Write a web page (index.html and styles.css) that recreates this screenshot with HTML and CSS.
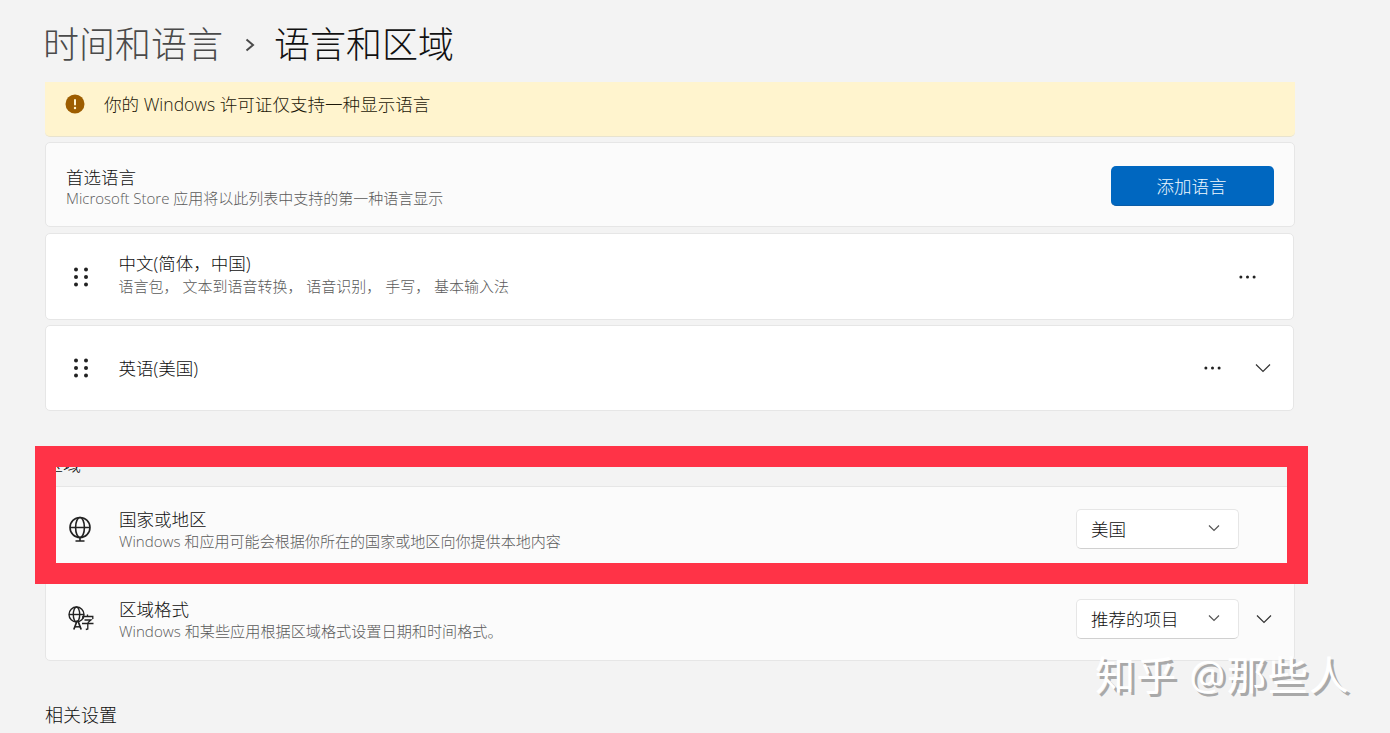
FILE: index.html
```html
<!DOCTYPE html>
<html lang="zh-CN">
<head>
<meta charset="utf-8">
<title>语言和区域</title>
<link rel="stylesheet" href="styles.css">
</head>
<body>
<main class="page">
  <h1 class="title"><span class="crumb">时间和语言</span><svg class="crumb-sep" viewBox="0 0 12 16" width="12" height="16"><path d="M2.5 2.5L9 8l-6.5 5.5" fill="none" stroke="#4a4a4a" stroke-width="2"/></svg><span>语言和区域</span></h1>

  <section class="notice">
    <svg class="notice-icon" viewBox="0 0 20 20" width="20" height="20"><circle cx="10" cy="10" r="9.5" fill="#9d5d00"/><rect x="9" y="5" width="2" height="6.5" rx="1" fill="#fff4ce"/><circle cx="10" cy="14" r="1.2" fill="#fff4ce"/></svg>
    <span class="notice-text">你的 Windows 许可证仅支持一种显示语言</span>
  </section>

  <section class="card card-pref">
    <div class="texts">
      <div class="name">首选语言</div>
      <div class="desc">Microsoft Store 应用将以此列表中支持的第一种语言显示</div>
    </div>
    <button class="primary">添加语言</button>
  </section>

  <section class="card card-lang lang-first">
    <svg class="grip" viewBox="0 0 16 20" width="16" height="20"><g fill="#222"><circle cx="3" cy="2.5" r="2"/><circle cx="13" cy="2.5" r="2"/><circle cx="3" cy="10" r="2"/><circle cx="13" cy="10" r="2"/><circle cx="3" cy="17.5" r="2"/><circle cx="13" cy="17.5" r="2"/></g></svg>
    <div class="texts">
      <div class="name">中文(简体，中国)</div>
      <div class="desc">语言包， 文本到语音转换， 语音识别， 手写， 基本输入法</div>
    </div>
    <svg class="more more-only" viewBox="0 0 18 4" width="17" height="4"><g fill="#222"><circle cx="2" cy="2" r="1.6"/><circle cx="9" cy="2" r="1.6"/><circle cx="16" cy="2" r="1.6"/></g></svg>
  </section>

  <section class="card card-lang lang-second">
    <svg class="grip" viewBox="0 0 16 20" width="16" height="20"><g fill="#222"><circle cx="3" cy="2.5" r="2"/><circle cx="13" cy="2.5" r="2"/><circle cx="3" cy="10" r="2"/><circle cx="13" cy="10" r="2"/><circle cx="3" cy="17.5" r="2"/><circle cx="13" cy="17.5" r="2"/></g></svg>
    <div class="texts">
      <div class="name">英语(美国)</div>
    </div>
    <svg class="more" viewBox="0 0 18 4" width="17" height="4"><g fill="#222"><circle cx="2" cy="2" r="1.6"/><circle cx="9" cy="2" r="1.6"/><circle cx="16" cy="2" r="1.6"/></g></svg>
    <svg class="expand" viewBox="0 0 16 10" width="16" height="10"><path d="M1 1.5l7 7 7-7" fill="none" stroke="#333" stroke-width="1.2"/></svg>
  </section>

  <h2 class="section-head region-head">区域</h2>

  <section class="card card-region">
    <svg class="row-icon" viewBox="0 0 24 26" width="24" height="26"><g fill="none" stroke="#222" stroke-width="1.6"><circle cx="12" cy="11.5" r="10"/><ellipse cx="12" cy="11.5" rx="4.4" ry="10"/><path d="M2 11.5h20M12 21.5v3.5M7.5 25h9"/></g></svg>
    <div class="texts">
      <div class="name">国家或地区</div>
      <div class="desc">Windows 和应用可能会根据你所在的国家或地区向你提供本地内容</div>
    </div>
    <div class="select"><span>美国</span><svg viewBox="0 0 12 8" width="12" height="8"><path d="M1 1.5l5 5 5-5" fill="none" stroke="#555" stroke-width="1.2"/></svg></div>
    <span class="expand-gap"></span>
  </section>

  <section class="card card-format">
    <svg class="row-icon" viewBox="0 0 26 26" width="26" height="26"><g fill="none" stroke="#222" stroke-width="1.4"><circle cx="8.5" cy="8.5" r="7.5"/><ellipse cx="8.5" cy="8.5" rx="3.2" ry="7.5"/><path d="M1 8.5h15"/></g><path d="M5.8 23.5l3.2-8.5h1l3.2 8.5" fill="#fbfbfb" stroke="#222" stroke-width="1.7"/><path d="M7 20.8h5.6" stroke="#222" stroke-width="1.5"/><path d="M19.5 8.5v2M14.8 13v-2.5h10V13M16.5 14h6.5l-3 2.5M14 17.5h11.5M19.8 16.5v6.5l-2 .5" fill="none" stroke="#222" stroke-width="1.3"/></svg>
    <div class="texts">
      <div class="name">区域格式</div>
      <div class="desc">Windows 和某些应用根据区域格式设置日期和时间格式。</div>
    </div>
    <div class="select"><span>推荐的项目</span><svg viewBox="0 0 12 8" width="12" height="8"><path d="M1 1.5l5 5 5-5" fill="none" stroke="#555" stroke-width="1.2"/></svg></div>
    <svg class="expand expand-format" viewBox="0 0 16 10" width="16" height="10"><path d="M1 1.5l7 7 7-7" fill="none" stroke="#333" stroke-width="1.2"/></svg>
  </section>

  <h2 class="section-head related-head">相关设置</h2>
</main>
<div class="red-frame"></div>
<div class="watermark">知乎 @那些人</div>
</body>
</html>
```
FILE: styles.css
```css
* { box-sizing: border-box; }
html, body { margin: 0; height: 100%; }
body {
  background: #f3f3f3;
  color: #1b1b1b;
  font-family: "Open Sans", "Noto Sans CJK SC", sans-serif;
  overflow: hidden;
  position: relative;
}
.page {
  display: flex;
  flex-direction: column;
  width: 1250px;
  margin-left: 45px;
}
.title {
  display: flex;
  align-items: center;
  height: 82px;
  margin: 0 0 0 -2px;
  padding-top: 8px;
  font-size: 36px;
  font-weight: 300;
  color: #111;
  line-height: 1;
}
.crumb { color: #4a4a4a; }
.crumb-sep { margin: 0 18px 0 21px; }
.notice {
  display: flex;
  align-items: center;
  height: 55px;
  padding: 0 20px 11px 20px;
  background: #fff4ce;
  border-bottom: 1px solid #e8e3cf;
  border-radius: 0 0 5px 5px;
  font-size: 17.56px;
  font-weight: 300;
  color: #1c1708;
}
.notice-icon { margin-right: 19px; }
.card {
  display: flex;
  align-items: center;
  background: #fbfbfb;
  border: 1px solid #e6e6e6;
  border-radius: 5px;
}
.card-pref { height: 85px; margin-top: 5px; padding: 0 20px; justify-content: space-between; }
.card-pref .texts { padding-top: 5px; }
.card-pref .name { line-height: 21px; }
.card-lang { background: #fff; width: 1249px; padding-left: 27px; }
.lang-first { height: 87px; margin-top: 6px; }
.lang-first .texts { padding-bottom: 6px; }
.lang-first .name { line-height: 25px; }
.lang-second { height: 86px; margin-top: 5px; }
.texts { flex: 1; min-width: 0; }
.name { font-size: 17.5px; font-weight: 300; line-height: 22px; color: #0f0f0f; }
.desc { font-size: 15px; font-weight: 300; line-height: 20px; color: #5a5a5a; }
.primary {
  width: 163px;
  height: 40px;
  margin-top: 2px;
  padding: 0 2px 0 0;
  border: 0;
  border-bottom: 1px solid #0a5ca6;
  border-radius: 5px;
  background: #0067c0;
  color: #f0f9ff;
  font: inherit;
  font-size: 17.5px;
  font-weight: 300;
}
.grip { margin-right: 29.5px; }
.more-only { margin-right: 37px; }
.expand { margin: 0 22px 0 34px; }
.section-head { margin: 0; font-size: 18px; font-weight: 300; line-height: 24px; color: #0f0f0f; }
.region-head { margin-top: 41px; height: 34px; }
.card-region { height: 86px; padding-left: 22px; }
.card-region .name { line-height: 23px; }
.card-region .desc { font-size: 15.07px; }
.card-format { height: 84px; margin-top: 5px; padding-left: 22px; }
.card-format .name { line-height: 23px; }
.card-format .desc { font-size: 15.15px; }
.row-icon { margin-right: 27px; }
.card-format .row-icon { margin-right: 25px; }
.select {
  display: flex;
  align-items: center;
  justify-content: space-between;
  width: 163px;
  height: 40px;
  padding: 0 18px 2px 14px;
  background: #fff;
  border: 1px solid #e6e6e6;
  border-bottom-color: #d0d0d0;
  border-radius: 5px;
  font-size: 17.5px;
  font-weight: 300;
  color: #0f0f0f;
}
.expand-gap { width: 55px; }
.expand-format { margin: 0 22px 0 17px; }
.related-head { margin-top: 42px; }
.red-frame {
  position: absolute;
  left: 35px;
  top: 446px;
  width: 1273px;
  height: 138px;
  border: 21px solid #ff3347;
}
.watermark {
  position: absolute;
  left: 1095px;
  top: 647px;
  font-size: 40px;
  line-height: 56px;
  letter-spacing: 1.3px;
  white-space: nowrap;
  color: #fff;
  text-shadow: 3px 3px 0 #a9a9a9;
}
```
